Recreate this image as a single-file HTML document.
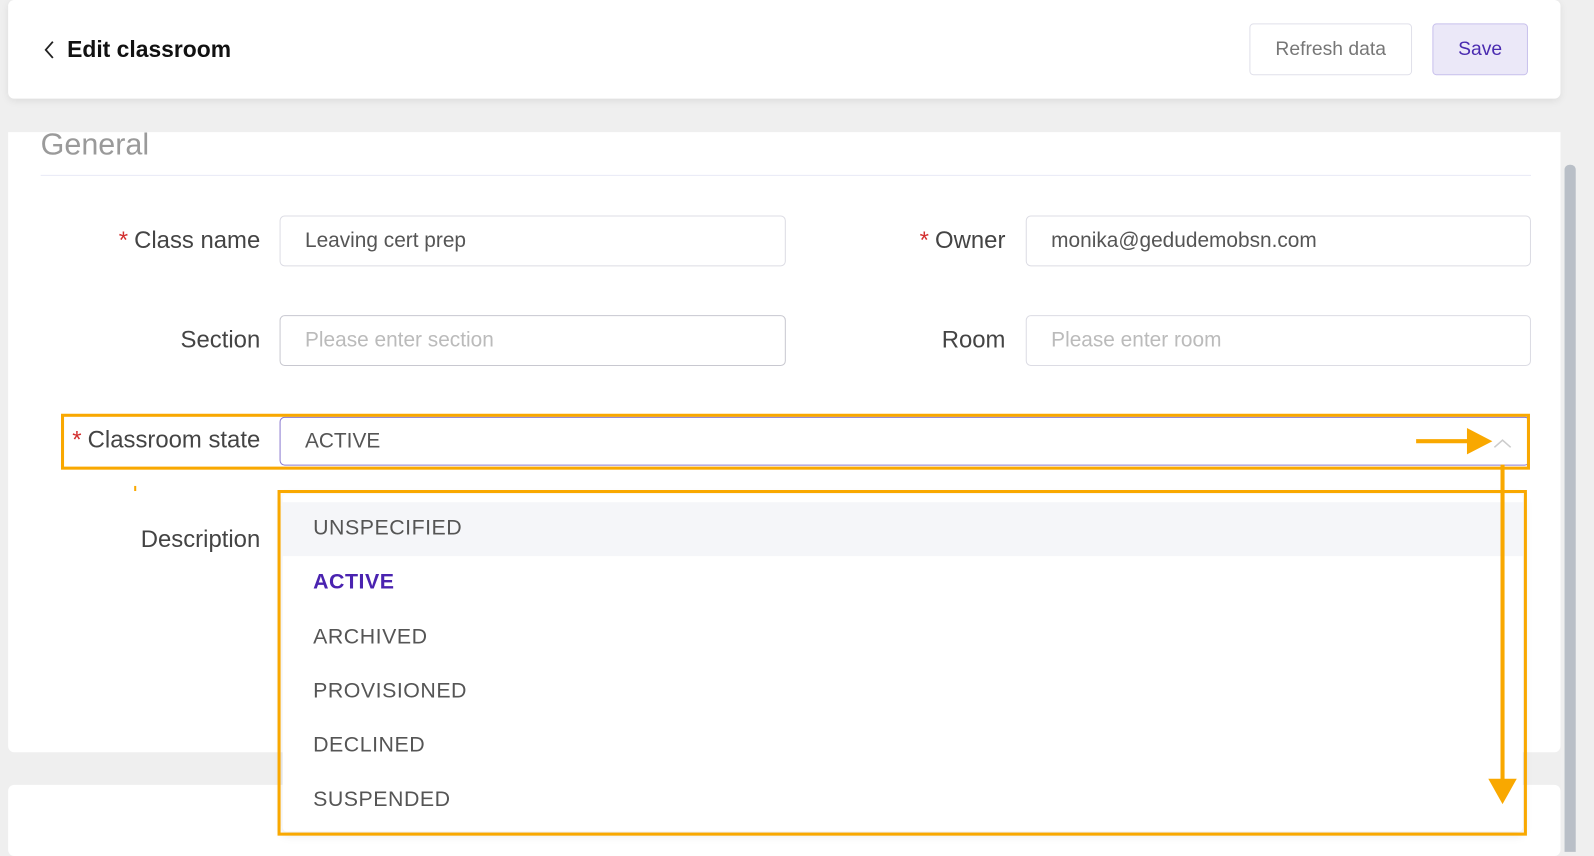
<!DOCTYPE html>
<html><head><meta charset="utf-8"><style>
*{box-sizing:border-box;margin:0;padding:0}
body{width:1594px;height:841px;background:#efefef;font-family:"Liberation Sans",sans-serif;position:relative;overflow:hidden}
#w{position:absolute;left:0;top:0;width:1568px;height:828px;transform:scale(1.0166);transform-origin:0 0}
.abs{position:absolute}
.card{background:#fff;border-radius:6px}
.lbl{position:absolute;font-size:23.5px;color:#444;text-align:right;width:250px}
.lbl b{color:#d32f2f;font-weight:normal;margin-right:6px}
.inp{position:absolute;height:50px;border:1px solid #dcdce4;border-radius:5px;font-size:20.5px;color:#555;padding:12px 24px;background:#fff}
.ph{color:#bbb}
.opt{position:absolute;left:308px;font-size:21px;color:#555;letter-spacing:.5px}
.ob{position:absolute;border:3px solid #f9a800}
</style></head><body><div id="w">
<div class="abs card" style="left:8px;top:0;width:1527px;height:97px;box-shadow:0 2px 8px rgba(0,0,0,.08)"></div>
<svg class="abs" style="left:42px;top:40px" width="14" height="18"><path d="M10 1 L3 9 L10 17" fill="none" stroke="#222" stroke-width="1.8"/></svg>
<div class="abs" style="left:66px;top:36px;font-size:22.5px;font-weight:bold;color:#111">Edit classroom</div>
<div class="abs" style="left:1229px;top:23px;width:160px;height:51px;border:1px solid #e0e0ea;border-radius:4px;font-size:19px;color:#777;text-align:center;line-height:49px">Refresh data</div>
<div class="abs" style="left:1409px;top:23px;width:94px;height:51px;border:1px solid #c8c0ec;background:#ebe8f8;border-radius:4px;font-size:19px;color:#4a2bb0;text-align:center;line-height:49px">Save</div>

<div class="abs" style="left:8px;top:130px;width:1527px;height:610px;background:#fff;border-radius:0 0 6px 6px"></div>
<div class="abs" style="left:8px;top:772px;width:1527px;height:70px;background:#fff;border-radius:6px"></div>
<div class="abs" style="left:1539px;top:162px;width:11px;height:676px;background:#b9bfc7;border-radius:5px 5px 0 0"></div>
<div class="abs" style="left:40px;top:126px;font-size:30px;color:#9a9a9a">General</div>
<div class="abs" style="left:40px;top:172px;width:1466px;height:1px;background:#e8eaf6"></div>

<div class="lbl" style="left:6px;top:223px"><b>*</b>Class name</div>
<div class="inp" style="left:275px;top:212px;width:498px">Leaving cert prep</div>
<div class="lbl" style="left:739px;top:223px"><b>*</b>Owner</div>
<div class="inp" style="left:1009px;top:212px;width:497px">monika@gedudemobsn.com</div>
<div class="lbl" style="left:6px;top:321px">Section</div>
<div class="inp ph" style="left:275px;top:310px;width:498px;border-color:#c8c8d0">Please enter section</div>
<div class="lbl" style="left:739px;top:321px">Room</div>
<div class="inp ph" style="left:1009px;top:310px;width:497px">Please enter room</div>
<div class="lbl" style="left:6px;top:419px"><b>*</b>Classroom state</div>
<div class="inp" style="left:275px;top:410px;width:1230px;height:48px;border-color:#8a7ad0;padding-top:11px">ACTIVE</div>
<svg class="abs" style="left:1469px;top:430px" width="18" height="12"><path d="M1 10 L9 3 L17 10" fill="none" stroke="#ccc" stroke-width="1.5"/></svg>
<div class="lbl" style="left:6px;top:517px">Description</div>
<div class="abs" style="left:132px;top:478px;width:2px;height:5px;background:#f9a800"></div>

<div class="abs" style="left:278px;top:486px;width:1220px;height:332px;background:#fff;border-radius:4px;box-shadow:0 3px 10px rgba(0,0,0,.1)"></div>
<div class="abs" style="left:278px;top:494px;width:1220px;height:53px;background:#f5f6f9"></div>
<div class="opt" style="top:508px">UNSPECIFIED</div>
<div class="opt" style="top:561px;color:#4a23b0;font-weight:bold">ACTIVE</div>
<div class="opt" style="top:615px">ARCHIVED</div>
<div class="opt" style="top:668px">PROVISIONED</div>
<div class="opt" style="top:721px">DECLINED</div>
<div class="opt" style="top:775px">SUSPENDED</div>

<div class="ob" style="left:60px;top:407px;width:1445px;height:55px"></div>
<div class="ob" style="left:273px;top:482px;width:1229px;height:340px"></div>
<svg class="abs" style="left:0;top:0" width="1594" height="841">
<line x1="1393" y1="434" x2="1445" y2="434" stroke="#f9a800" stroke-width="4"/>
<polygon points="1443,421 1468,434 1443,447" fill="#f9a800"/>
<line x1="1478" y1="457" x2="1478" y2="770" stroke="#f9a800" stroke-width="4"/>
<polygon points="1464,766 1492,766 1478,791" fill="#f9a800"/>
</svg>
</div></body></html>
